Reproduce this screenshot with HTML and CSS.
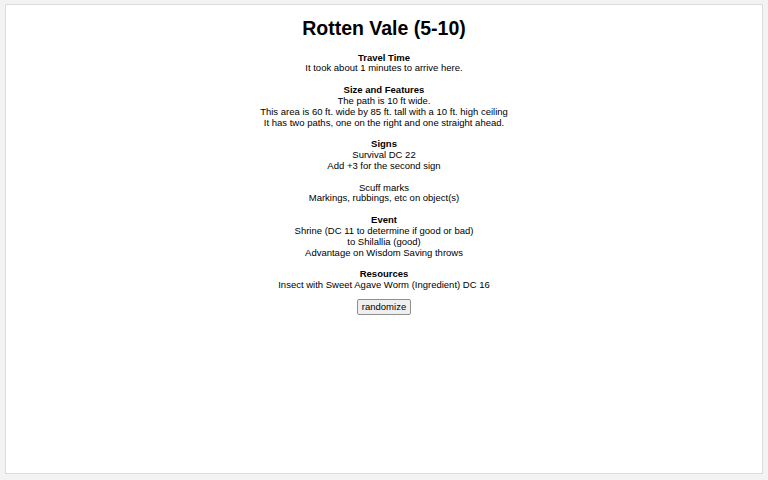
FILE: index.html
```html
<!DOCTYPE html>
<html>
<head>
<meta charset="utf-8">
<link rel="stylesheet" href="styles.css">
</head>
<body>
<div class="card">
  <h1 class="title">Rotten Vale (5-10)</h1>
  <div class="section">
    <div class="head">Travel Time</div>
    <div>It took about 1 minutes to arrive here.</div>
  </div>
  <div class="section">
    <div class="head">Size and Features</div>
    <div>The path is 10 ft wide.</div>
    <div>This area is 60 ft. wide by 85 ft. tall with a 10 ft. high ceiling</div>
    <div>It has two paths, one on the right and one straight ahead.</div>
  </div>
  <div class="section">
    <div class="head">Signs</div>
    <div>Survival DC 22</div>
    <div>Add +3 for the second sign</div>
  </div>
  <div class="section">
    <div>Scuff marks</div>
    <div>Markings, rubbings, etc on object(s)</div>
  </div>
  <div class="section">
    <div class="head">Event</div>
    <div>Shrine (DC 11 to determine if good or bad)</div>
    <div>to Shilallia (good)</div>
    <div>Advantage on Wisdom Saving throws</div>
  </div>
  <div class="section section-last">
    <div class="head">Resources</div>
    <div>Insect with Sweet Agave Worm (Ingredient) DC 16</div>
  </div>
  <div class="actions">
    <button class="btn">randomize</button>
  </div>
</div>
</body>
</html>
```

FILE: styles.css
```css
html, body {
  margin: 0;
  padding: 0;
}
body {
  background: #f3f3f3;
  padding: 4px 5px 6px 5px;
  font-family: "Liberation Sans", Arial, sans-serif;
  font-size: 9.5px;
  line-height: 10.85px;
  color: #000;
}
.card {
  background: #fff;
  border: 1px solid #dcdcdc;
  height: 468px;
  box-sizing: content-box;
  text-align: center;
}
.title {
  font-size: 19.5px;
  line-height: 24px;
  font-weight: bold;
  margin: 11px 0 12.5px 0;
}
.section {
  margin-bottom: 10.85px;
}
.section-last {
  margin-bottom: 7.5px;
}
.head {
  font-weight: bold;
}
.btn {
  font-family: "Liberation Sans", Arial, sans-serif;
  font-size: 9.5px;
  line-height: 12px;
  padding: 1px 4px;
  background: #efefef;
  border: 1px solid #8f8f8f;
  border-radius: 2px;
  color: #000;
}
```
